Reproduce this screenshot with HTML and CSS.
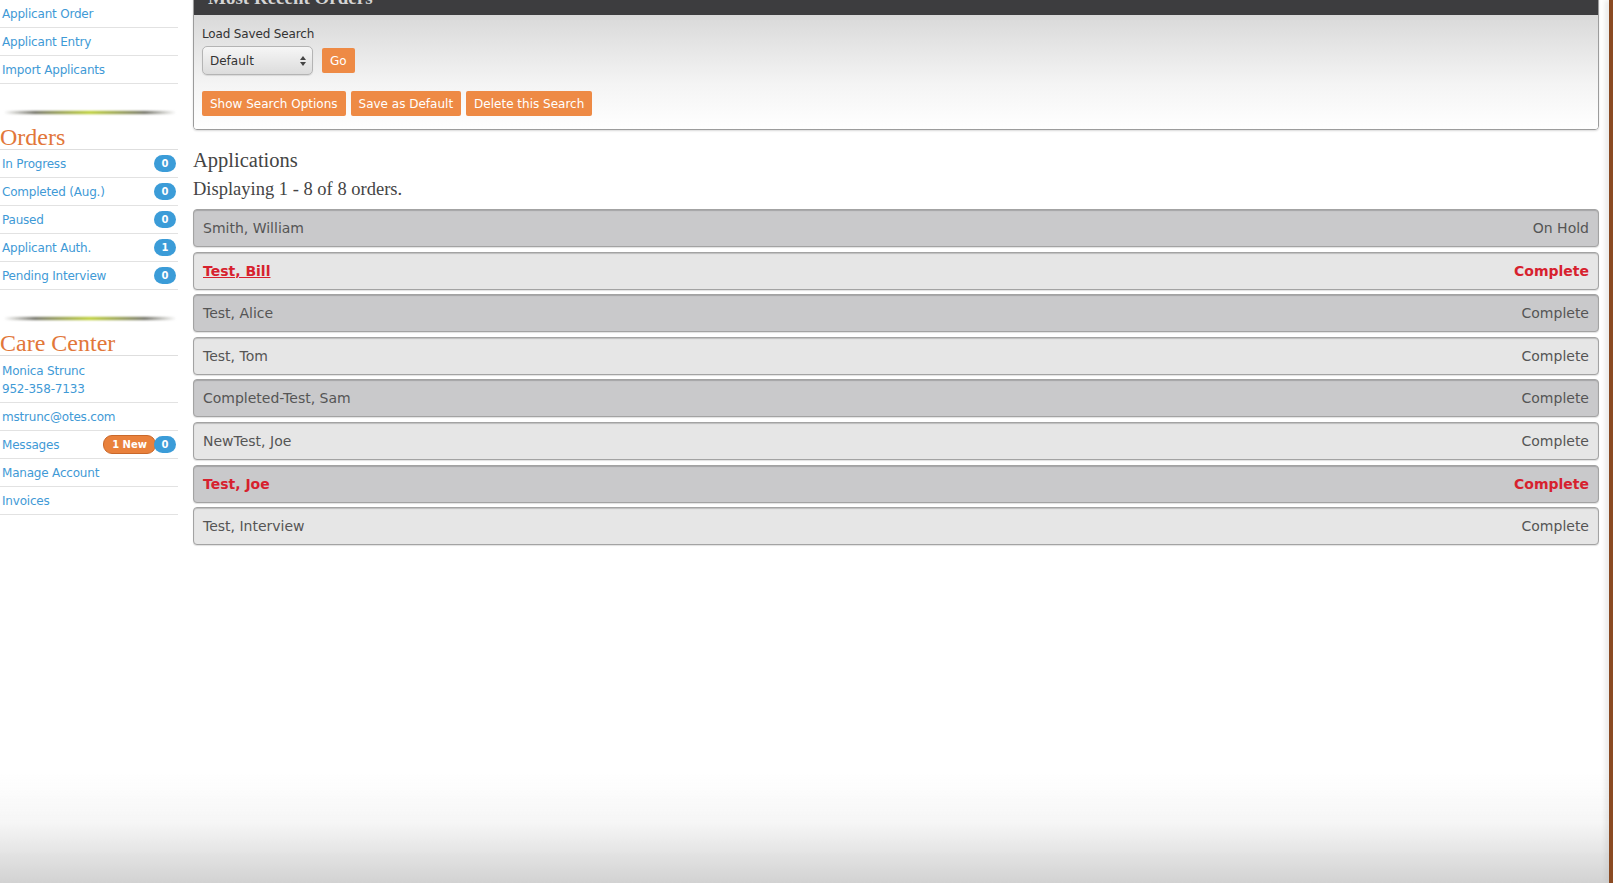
FILE: index.html
```html
<!DOCTYPE html>
<html lang="en">
<head>
    <meta charset="UTF-8">
    <meta name="viewport" content="width=device-width, initial-scale=1.0">
    <title>Applications</title>
    <link rel="stylesheet" href="styles.css">
</head>
<body>

<div class="page">
    <!-- Left navigation -->
    <aside class="sidebar">
        <ul class="side-list">
            <li><a href="#">Applicant Order</a></li>
            <li><a href="#">Applicant Entry</a></li>
            <li><a href="#">Import Applicants</a></li>
        </ul>

        <div class="divider"></div>
        <h3 class="side-title">Orders</h3>
        <ul class="side-list">
            <li><a href="#">In Progress</a><span class="count">0</span></li>
            <li><a href="#">Completed (Aug.)</a><span class="count">0</span></li>
            <li><a href="#">Paused</a><span class="count">0</span></li>
            <li><a href="#">Applicant Auth.</a><span class="count">1</span></li>
            <li><a href="#">Pending Interview</a><span class="count">0</span></li>
        </ul>

        <div class="divider"></div>
        <h3 class="side-title">Care Center</h3>
        <ul class="side-list">
            <li class="contact"><a href="#">Monica Strunc</a><a href="#">952-358-7133</a></li>
            <li><a href="#">mstrunc@otes.com</a></li>
            <li>
                <a href="#">Messages</a>
                <span class="badges"><span class="new-badge">1 New</span><span class="count">0</span></span>
            </li>
            <li><a href="#">Manage Account</a></li>
            <li><a href="#">Invoices</a></li>
        </ul>
    </aside>

    <!-- Main content -->
    <main class="content">
        <div class="search-panel">
            <div class="panel-head">Most Recent Orders</div>
            <div class="panel-body">
                <div class="field-label">Load Saved Search</div>
                <div class="select-row">
                    <div class="fake-select">
                        <span>Default</span>
                        <svg width="6" height="10" viewBox="0 0 6 10"><path d="M3 0 L6 4 L0 4 Z M0 6 L6 6 L3 10 Z" fill="#444"/></svg>
                    </div>
                    <button class="btn">Go</button>
                </div>
                <div class="btn-row">
                    <button class="btn">Show Search Options</button>
                    <button class="btn">Save as Default</button>
                    <button class="btn">Delete this Search</button>
                </div>
            </div>
        </div>

        <h2 class="section-title">Applications</h2>
        <p class="result-count">Displaying 1 - 8 of 8 orders.</p>

        <div class="orders">
            <div class="order dark"><span>Smith, William</span><span>On Hold</span></div>
            <div class="order light alert"><a href="#">Test, Bill</a><span>Complete</span></div>
            <div class="order dark"><span>Test, Alice</span><span>Complete</span></div>
            <div class="order light"><span>Test, Tom</span><span>Complete</span></div>
            <div class="order dark"><span>Completed-Test, Sam</span><span>Complete</span></div>
            <div class="order light"><span>NewTest, Joe</span><span>Complete</span></div>
            <div class="order dark alert"><span>Test, Joe</span><span>Complete</span></div>
            <div class="order light"><span>Test, Interview</span><span>Complete</span></div>
        </div>
    </main>
</div>

<!-- window edge and bottom fade -->
<div class="edge"></div>
<div class="fade"></div>

</body>
</html>
```

FILE: styles.css
```css
body {
    margin: 0;
    background-color: #fff;
    font-family: "DejaVu Sans", Verdana, sans-serif;
    color: #555;
    overflow: hidden;
    height: 883px;
}

.page {
    display: flex;
    align-items: flex-start;
}

/* Sidebar */
.sidebar {
    width: 178px;
    flex-shrink: 0;
}

.side-list {
    list-style: none;
    margin: 0;
    padding: 0;
}

.side-list li {
    height: 28px;
    box-sizing: border-box;
    border-bottom: 1px solid #e2e2e2;
    display: flex;
    align-items: center;
    justify-content: space-between;
    padding: 0 2px 0 2px;
}

.side-list a {
    color: #3f9ad6;
    text-decoration: none;
    font-size: 12px;
    letter-spacing: -0.2px;
}

.side-list li.contact {
    height: 47px;
    flex-direction: column;
    align-items: flex-start;
    justify-content: center;
    line-height: 18px;
    padding-top: 2px;
}

.count {
    background-color: #3b9cd8;
    color: #fff;
    font-size: 10px;
    font-weight: bold;
    width: 22px;
    height: 17px;
    line-height: 17px;
    border-radius: 9px;
    text-align: center;
}

.badges {
    display: flex;
    align-items: center;
}

.new-badge {
    background-color: #e9813c;
    color: #fff;
    font-size: 10px;
    font-weight: bold;
    height: 17px;
    line-height: 17px;
    padding: 0 8px;
    border-radius: 9px;
    margin-right: -2px;
    border: 1px solid #c9682a;
}

.badges .count {
    position: relative;
}

.divider {
    height: 3px;
    margin: 27px 2px 11px 4px;
    background: linear-gradient(90deg, rgba(90, 90, 90, 0), #6d6d62 18%, #b8cc2a 50%, #6d6d62 82%, rgba(90, 90, 90, 0));
    filter: blur(0.8px);
}

.side-title {
    margin: 0;
    font-family: "Liberation Serif", "Times New Roman", serif;
    font-weight: normal;
    font-size: 24px;
    line-height: 24px;
    color: #e2773a;
    border-bottom: 1px solid #dedede;
}

/* Main content */
.content {
    flex: 1;
    margin: 0 14px 0 15px;
}

.search-panel {
    margin-top: -17px;
    border: 1px solid #9c9c9c;
    border-radius: 4px;
    box-shadow: 0 1px 2px rgba(0, 0, 0, 0.15);
    overflow: hidden;
}

.panel-head {
    height: 31px;
    line-height: 28px;
    background-color: #3d3d3f;
    color: #d4d4d4;
    font-family: "Liberation Serif", "Times New Roman", serif;
    font-weight: bold;
    font-size: 19px;
    padding-left: 14px;
}

.panel-body {
    background: linear-gradient(#d9d9d9, #f4f4f4 60%, #fff);
    padding: 12px 8px 13px 8px;
}

.field-label {
    font-size: 12px;
    line-height: 15px;
    letter-spacing: -0.15px;
    color: #333;
}

.select-row {
    display: flex;
    align-items: center;
    gap: 9px;
    margin-top: 4px;
}

.fake-select {
    width: 111px;
    height: 29px;
    box-sizing: border-box;
    border: 1px solid #b4b4b4;
    border-radius: 5px;
    background: linear-gradient(#f6f6f6, #dcdcdc);
    box-shadow: 0 1px 1px rgba(0, 0, 0, 0.1);
    display: flex;
    align-items: center;
    justify-content: space-between;
    padding: 0 6px 0 7px;
    font-size: 12px;
    color: #333;
}

.btn {
    background-color: #ee8a45;
    color: #fff;
    border: none;
    border-radius: 2px;
    height: 25px;
    padding: 0 8px;
    font-family: "DejaVu Sans", Verdana, sans-serif;
    font-size: 12px;
    cursor: pointer;
}

.btn-row {
    display: flex;
    gap: 5px;
    margin-top: 16px;
}

.section-title {
    margin: 18px 0 0 0;
    font-family: "Liberation Serif", "Times New Roman", serif;
    font-weight: normal;
    font-size: 20.5px;
    line-height: 24px;
    color: #444;
}

.result-count {
    margin: 6px 0 9px 0;
    font-family: "Liberation Serif", "Times New Roman", serif;
    font-size: 18.5px;
    line-height: 22px;
    color: #444;
}

.orders {
    display: flex;
    flex-direction: column;
    gap: 4.6px;
}

.order {
    height: 38px;
    box-sizing: border-box;
    border: 1px solid #a3a3a3;
    border-radius: 4px;
    box-shadow: inset 0 1px 1px rgba(0, 0, 0, 0.18), 0 1px 1px rgba(0, 0, 0, 0.12);
    display: flex;
    align-items: center;
    justify-content: space-between;
    padding: 0 9px;
    font-size: 14px;
    color: #555;
}

.order.dark {
    background-color: #c9c9cb;
}

.order.light {
    background-color: #e6e6e6;
}

.order.alert,
.order.alert a {
    color: #d7212e;
    font-weight: bold;
}

.order.alert a {
    text-decoration: underline;
}

/* Window edge and bottom shading */
.edge {
    position: fixed;
    top: 0;
    right: 0;
    width: 4px;
    height: 100%;
    background-color: #8a4a22;
    box-shadow: -3px 0 5px rgba(0, 0, 0, 0.12);
}

.fade {
    position: fixed;
    left: 0;
    right: 4px;
    bottom: 0;
    height: 110px;
    background: linear-gradient(rgba(180, 180, 180, 0), rgba(180, 180, 180, 0.12) 45%, rgba(180, 180, 180, 0.6));
    pointer-events: none;
}
```
